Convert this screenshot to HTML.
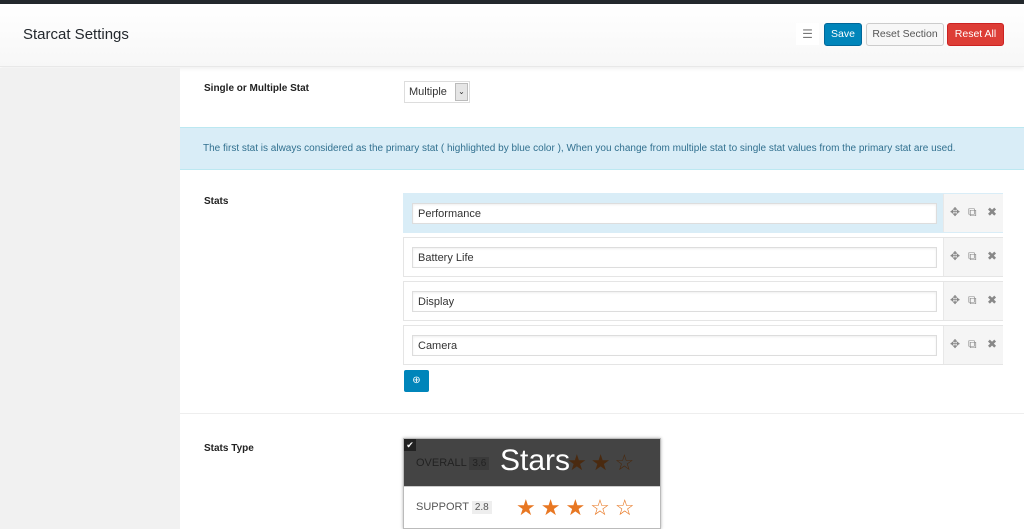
<!DOCTYPE html>
<html><head><style>
*{box-sizing:border-box;margin:0;padding:0}
body{width:1024px;height:529px;overflow:hidden;background:#fff;font-family:"Liberation Sans",sans-serif;font-size:11px;color:#333;position:relative}
.abs{position:absolute}
.btn{position:absolute;top:23px;height:23px;border-radius:3px;font-size:10.5px;line-height:21px;text-align:center}
.row{position:absolute;left:403px;width:600px;height:40px;border:1px solid #e5e5e5;background:#fff}
.row .in{position:absolute;left:8px;top:9px;width:525px;height:21px;border:1px solid #ddd;background:#fff;padding-left:5px;line-height:20px;font-size:11px;color:#333;box-shadow:inset 0 1px 2px rgba(0,0,0,.07)}
.row .act{position:absolute;left:539px;top:0;width:60px;height:38px;background:#f5f5f5;border-left:1px solid #e8e8e8}
.ico{position:absolute;top:11px;color:#888;font-size:12px}
.lbl{position:absolute;left:204px;font-weight:bold;font-size:10px;color:#222}
</style></head><body>
<div class="abs" style="left:0;top:0;width:1024px;height:4px;background:#23282d"></div>
<div class="abs" style="left:0;top:4px;width:1024px;height:63px;background:linear-gradient(#fff,#f7f7f7);border-bottom:1px solid #e8e8e8;box-shadow:0 2px 4px rgba(0,0,0,.06)"></div>
<div class="abs" style="left:23px;top:26px;font-size:15px;color:#23282d">Starcat Settings</div>
<div class="abs" style="left:796px;top:23px;width:23px;height:22px;background:#fff;text-align:center;line-height:22px;color:#777;font-size:12px">☰</div>
<div class="btn" style="left:824px;width:38px;background:#0085ba;border:1px solid #006799;color:#fff">Save</div>
<div class="btn" style="left:866px;width:78px;background:#f7f7f7;border:1px solid #ccc;color:#555">Reset Section</div>
<div class="btn" style="left:947px;width:57px;background:#dd3d36;border:1px solid #c22;color:#fff">Reset All</div>
<div class="abs" style="left:0;top:68px;width:180px;height:461px;background:#f1f1f1"></div>
<div class="lbl" style="top:83px">Single or Multiple Stat</div>
<div class="abs" style="left:404px;top:81px;width:66px;height:22px;border:1px solid #ddd;background:#fff;font-size:11px;line-height:20px;padding-left:4px">Multiple<span style="position:absolute;right:1px;top:1px;width:13px;height:18px;background:#e5e5e5;border:1px solid #bbb;font-size:8px;text-align:center;line-height:16px">⌄</span></div>
<div class="abs" style="left:180px;top:127px;width:844px;height:43px;background:#d9edf7;border-top:1px solid #bce8f1;border-bottom:1px solid #bce8f1;color:#31708f;font-size:10px;line-height:41px;padding-left:23px;white-space:nowrap">The first stat is always considered as the primary stat ( highlighted by blue color ), When you change from multiple stat to single stat values from the primary stat are used.</div>
<div class="lbl" style="top:196px">Stats</div>
<div class="row" style="top:193px;background:#d9edf7;border-color:#d9edf7"><div class="in">Performance</div><div class="act"><span class="ico" style="left:6px">✥</span><span class="ico" style="left:24px">⧉</span><span class="ico" style="left:43px">✖</span></div></div>
<div class="row" style="top:237px"><div class="in">Battery Life</div><div class="act"><span class="ico" style="left:6px">✥</span><span class="ico" style="left:24px">⧉</span><span class="ico" style="left:43px">✖</span></div></div>
<div class="row" style="top:281px"><div class="in">Display</div><div class="act"><span class="ico" style="left:6px">✥</span><span class="ico" style="left:24px">⧉</span><span class="ico" style="left:43px">✖</span></div></div>
<div class="row" style="top:325px"><div class="in">Camera</div><div class="act"><span class="ico" style="left:6px">✥</span><span class="ico" style="left:24px">⧉</span><span class="ico" style="left:43px">✖</span></div></div>
<div class="abs" style="left:404px;top:370px;width:25px;height:22px;background:#0085ba;border-radius:2px;color:#fff;text-align:center;line-height:22px;font-size:10px">⊕</div>
<div class="abs" style="left:180px;top:413px;width:844px;height:1px;background:#eee"></div>
<div class="lbl" style="top:443px">Stats Type</div>
<div class="abs" style="left:403px;top:438px;width:258px;height:91px;border:1px solid #bbb;box-shadow:0 0 3px rgba(0,0,0,.3);background:#fff;overflow:hidden">
<div style="position:absolute;left:0;top:0;width:258px;height:47px;background:#444"></div>
<div style="position:absolute;left:0;top:0;width:12px;height:12px;background:#222;color:#fff;font-size:9px;line-height:12px;text-align:center">✔</div>
<div style="position:absolute;left:12px;top:18px;color:#222;font-size:11px">OVERALL <span style="background:#3a3a3a;padding:1px 3px;font-size:10px">3.6</span></div>
<div style="position:absolute;left:163px;top:11px;color:#4a2a10;font-size:22px;letter-spacing:4px">★★☆</div>
<div style="position:absolute;left:96px;top:5px;color:#fff;font-size:30px">Stars</div>
<div style="position:absolute;left:0;top:47px;width:258px;height:1px;background:#ccc"></div>
<div style="position:absolute;left:12px;top:62px;color:#555;font-size:11px">SUPPORT <span style="background:#eee;padding:1px 3px;font-size:10px">2.8</span></div>
<div style="position:absolute;left:112px;top:56px;color:#e87722;font-size:22px;letter-spacing:5px">★★★☆☆</div>
</div>
</body></html>
